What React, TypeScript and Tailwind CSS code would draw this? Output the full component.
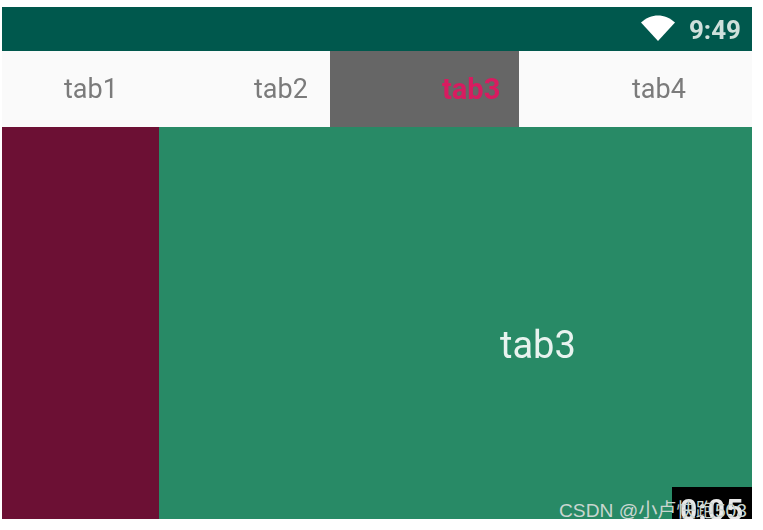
export default function App() {
  const roboto = "font-['Roboto',sans-serif]";
  return (
    <div className={`w-[763px] h-[530px] bg-white pt-[7px] pl-[2px] ${roboto}`}>
      <div className="relative w-[750px] h-[512px] flex flex-col overflow-hidden">
        <div className="h-[44px] bg-[#00584d] flex items-center justify-end pr-[11px] shrink-0">
          <svg width="34" height="26" viewBox="0 0 34 26" className="mr-[14px] mt-[-2px]">
            <path d="M0 7.5 C10 -2 24 -2 34 7.5 L17 26 Z" fill="#ffffff" />
          </svg>
          <span className="text-[26px] leading-none font-bold text-[#cfe0dc] mt-[1px] blur-[0.6px]">9:49</span>
        </div>
        <div className="h-[76px] bg-[#fafafa] flex shrink-0 text-[27px] leading-none text-[#7b7b7b] blur-[0.6px]">
          <div className="w-[139px] flex items-center pl-[62px] pt-[1px]">tab1</div>
          <div className="w-[189px] flex items-center pl-[113px] pt-[1px]">tab2</div>
          <div className="w-[189px] bg-[#666666] flex items-center pl-[112px] pt-[1px] text-[29px] font-bold text-[#d81b60]">tab3</div>
          <div className="flex-1 flex items-center pl-[113px] pt-[1px]">tab4</div>
        </div>
        <div className="flex-1 flex min-h-0">
          <div className="w-[157px] bg-[#6c1034] shrink-0" />
          <div className="flex-1 bg-[#288a66] flex items-center pl-[341px] pt-[44px]">
            <span className="text-[38px] leading-none text-[#e8f3ef] blur-[0.5px]">tab3</span>
          </div>
        </div>
        <div className="absolute right-0 bottom-0 w-[80px] h-[32px] bg-black overflow-hidden pl-[8px] pt-[8px]">
          <span className="block text-[30px] leading-none font-bold text-[#e8e8e8] tracking-[1px] blur-[0.6px]">0:05</span>
        </div>
      </div>
      <span className="absolute left-[559px] top-[499px] text-[19.2px] leading-[24px] whitespace-nowrap text-[#c9d6d0] font-['Liberation_Sans','Noto_Sans_CJK_SC',sans-serif]">
        CSDN @小卢快跑503
      </span>
    </div>
  );
}
